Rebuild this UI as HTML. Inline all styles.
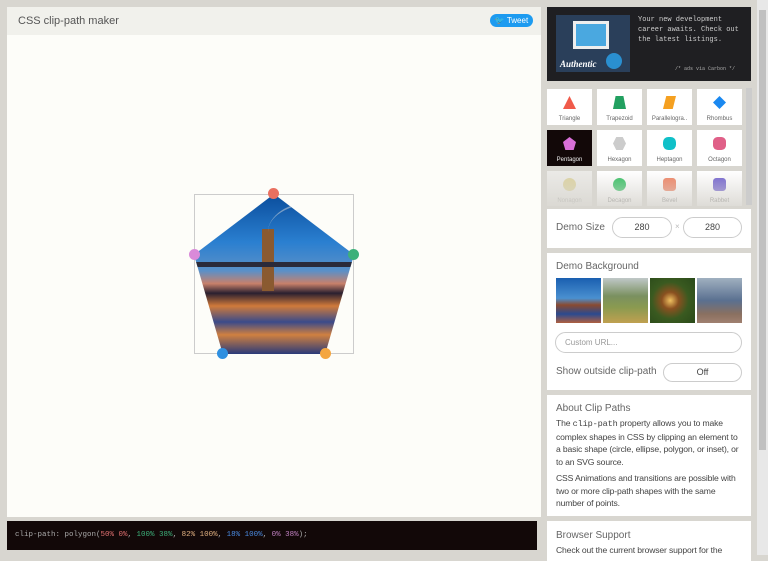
<!DOCTYPE html>
<html><head><meta charset="utf-8"><style>
*{box-sizing:border-box;margin:0;padding:0}
body{width:768px;height:555px;background:#d8d6d0;font-family:"Liberation Sans",sans-serif;position:relative;overflow:hidden;color:#555}
.a{position:absolute}
.main{left:7px;top:7px;width:534px;height:510px;background:#fdfdf9}
.hdr{left:0;top:0;width:534px;height:28px;background:#f1f1ec;font-size:11px;color:#555;padding:8px 11px}
.tw{right:8px;top:7px;width:43px;height:13px;background:#1d9bf0;border-radius:7px;color:#fff;font-size:8px;text-align:center;line-height:13px}
.code{left:7px;top:521px;width:530px;height:29px;background:#120808;font-family:"Liberation Mono",monospace;font-size:7.5px;color:#aaa;padding:10px 8px}
.card{background:#fff;left:547px;width:204px}
.cell{position:absolute;width:45px;height:36px;background:#fff;font-size:6px;text-align:center;color:#666;padding-top:27px}
.cell i{position:absolute;left:16px;top:7px;width:13px;height:13px}
.inp{position:absolute;border:1px solid #ccc;border-radius:12px;height:21px;font-size:9px;text-align:center;line-height:19px;color:#444;background:#fff}
.t{font-size:10px;color:#666}
p{font-size:8.6px;color:#444;line-height:12.5px;letter-spacing:-0.15px}
.dot{position:absolute;width:11px;height:11px;border-radius:50%}
</style></head><body>
<div class="a main">
<div class="a hdr">CSS clip-path maker<div class="a tw">🐦 Tweet</div></div>
</div>
<div class="a" style="left:194px;top:194px;width:160px;height:160px;border:1px solid #ccc"></div>
<div class="a" style="left:194px;top:194px;width:160px;height:160px;clip-path:polygon(50% 0%,100% 38%,82% 100%,18% 100%,0% 38%);background:linear-gradient(180deg,#0a4d9c 0%,#2a7fd0 30%,#5a90c8 48%,#c8806a 56%,#2a2030 62%,#d07a3a 70%,#3a4a8a 80%,#d08040 88%,#2a3a7a 100%)">
<div class="a" style="left:68px;top:35px;width:12px;height:62px;background:#8a5a30"></div>
<div class="a" style="left:0;top:68px;width:160px;height:5px;background:#2a2a3a"></div>
<div class="a" style="left:74px;top:8px;width:90px;height:60px;border-top:2px solid #ddd;border-radius:50% 0 0 0;opacity:.5"></div>
</div>
<div class="dot" style="left:268px;top:188px;background:#e97060"></div>
<div class="dot" style="left:348px;top:249px;background:#3db07a"></div>
<div class="dot" style="left:320px;top:348px;background:#f4a640"></div>
<div class="dot" style="left:217px;top:348px;background:#2e8fe0"></div>
<div class="dot" style="left:189px;top:249px;background:#d98ad9"></div>
<div class="a code">clip-path: polygon(<span style="color:#e07070">50% 0%</span>, <span style="color:#3db07a">100% 38%</span>, <span style="color:#e0b080">82% 100%</span>, <span style="color:#4a8ae0">18% 100%</span>, <span style="color:#c080c0">0% 38%</span>);</div>

<div class="a" style="left:547px;top:7px;width:204px;height:74px;background:#1f1f22">
<div class="a" style="left:9px;top:8px;width:74px;height:57px;background:#2a3f5a"><div class="a" style="left:17px;top:6px;width:36px;height:28px;background:#4aa8e0;border:3px solid #eee"></div><div class="a" style="left:50px;top:38px;width:16px;height:16px;border-radius:50%;background:#2a8fd0"></div><div class="a" style="left:4px;top:44px;color:#fff;font:italic bold 9px 'Liberation Serif',serif">Authentic</div></div>
<div class="a" style="left:91px;top:8px;font:7px/10px 'Liberation Mono',monospace;color:#ccc">Your new development<br>career awaits. Check out<br>the latest listings.</div>
<div class="a" style="left:128px;top:59px;font:5px 'Liberation Mono',monospace;color:#aaa">/* ads via Carbon */</div>
</div>
<div class="a" style="left:545px;top:86px;width:208px;height:120px;overflow:hidden">
<div class="cell" style="left:2px;top:3px"><i style="background:#f05a4a;clip-path:polygon(50% 0,100% 100%,0 100%)"></i>Triangle</div>
<div class="cell" style="left:52px;top:3px"><i style="background:#22a060;clip-path:polygon(20% 0,80% 0,100% 100%,0 100%)"></i>Trapezoid</div>
<div class="cell" style="left:102px;top:3px"><i style="background:#f5a020;clip-path:polygon(25% 0,100% 0,75% 100%,0 100%)"></i>Parallelogra..</div>
<div class="cell" style="left:152px;top:3px"><i style="background:#1a88f0;clip-path:polygon(50% 0,100% 50%,50% 100%,0 50%)"></i>Rhombus</div>
<div class="cell" style="left:2px;top:44px;background:#120808;color:#eee"><i style="background:#d870d8;clip-path:polygon(50% 0,100% 38%,82% 100%,18% 100%,0 38%)"></i>Pentagon</div>
<div class="cell" style="left:52px;top:44px"><i style="background:#ccc;clip-path:polygon(25% 0,75% 0,100% 50%,75% 100%,25% 100%,0 50%)"></i>Hexagon</div>
<div class="cell" style="left:102px;top:44px"><i style="background:#10c0c8;border-radius:40%"></i>Heptagon</div>
<div class="cell" style="left:152px;top:44px"><i style="background:#e06088;border-radius:35%"></i>Octagon</div>
<div class="cell" style="left:2px;top:85px;opacity:.5"><i style="background:#e0d070;border-radius:50%"></i>Nonagon</div>
<div class="cell" style="left:52px;top:85px"><i style="background:#30c060;border-radius:50%"></i>Decagon</div>
<div class="cell" style="left:102px;top:85px"><i style="background:#f08060;border-radius:25%"></i>Bevel</div>
<div class="cell" style="left:152px;top:85px"><i style="background:#7060d0;border-radius:25%"></i>Rabbet</div>
<div class="a" style="left:0;top:85px;width:208px;height:35px;background:linear-gradient(rgba(216,214,208,0),rgba(216,214,208,.85))"></div>
</div>
<div class="a" style="left:746px;top:88px;width:6px;height:117px;background:#ccc"></div>

<div class="a card" style="top:209px;height:39px"><div class="a t" style="left:9px;top:13px">Demo Size</div>
<div class="inp" style="left:65px;top:8px;width:60px">280</div><div class="a" style="left:128px;top:13px;font-size:8px;color:#bbb">×</div><div class="inp" style="left:136px;top:8px;width:59px">280</div></div>

<div class="a card" style="top:253px;height:137px"><div class="a t" style="left:9px;top:8px">Demo Background</div>
<div class="a" style="left:9px;top:25px;width:45px;height:45px;background:linear-gradient(#1a5fb0,#4a90d0 45%,#8a4a30 60%,#2a4a90 80%,#b06040)"></div>
<div class="a" style="left:56px;top:25px;width:45px;height:45px;background:linear-gradient(#c0c8c8,#7a9060 40%,#8a9a50 65%,#c0a050)"></div>
<div class="a" style="left:103px;top:25px;width:45px;height:45px;background:radial-gradient(circle at 45% 50%,#f0c060,#8a5020 25%,#3a5a20 55%,#2a4a1a)"></div>
<div class="a" style="left:150px;top:25px;width:45px;height:45px;background:linear-gradient(#a0b0c0,#5a7090 50%,#8a7060 80%,#a08070)"></div>
<div class="inp" style="left:8px;top:79px;width:187px;text-align:left;padding-left:9px;font-size:8px;color:#999">Custom URL...</div>
<div class="a t" style="left:9px;top:113px">Show outside clip-path</div>
<div class="inp" style="left:116px;top:110px;width:79px;height:19px;line-height:17px;border-radius:10px">Off</div></div>

<div class="a card" style="top:395px;height:121px;padding:8px 9px">
<div class="t" style="margin-bottom:3px">About Clip Paths</div>
<p>The <span style="font-family:'Liberation Mono',monospace">clip-path</span> property allows you to make complex shapes in CSS by clipping an element to a basic shape (circle, ellipse, polygon, or inset), or to an SVG source.</p>
<p style="margin-top:4px">CSS Animations and transitions are possible with two or more clip-path shapes with the same number of points.</p></div>

<div class="a card" style="top:521px;height:40px;padding:9px 9px">
<div class="t" style="margin-bottom:3px">Browser Support</div><p>Check out the current browser support for the</p></div>

<div class="a" style="left:757px;top:0;width:11px;height:555px;background:#e8e8e8"></div>
<div class="a" style="left:759px;top:10px;width:7px;height:440px;background:#c0c0c0"></div>
</body></html>
